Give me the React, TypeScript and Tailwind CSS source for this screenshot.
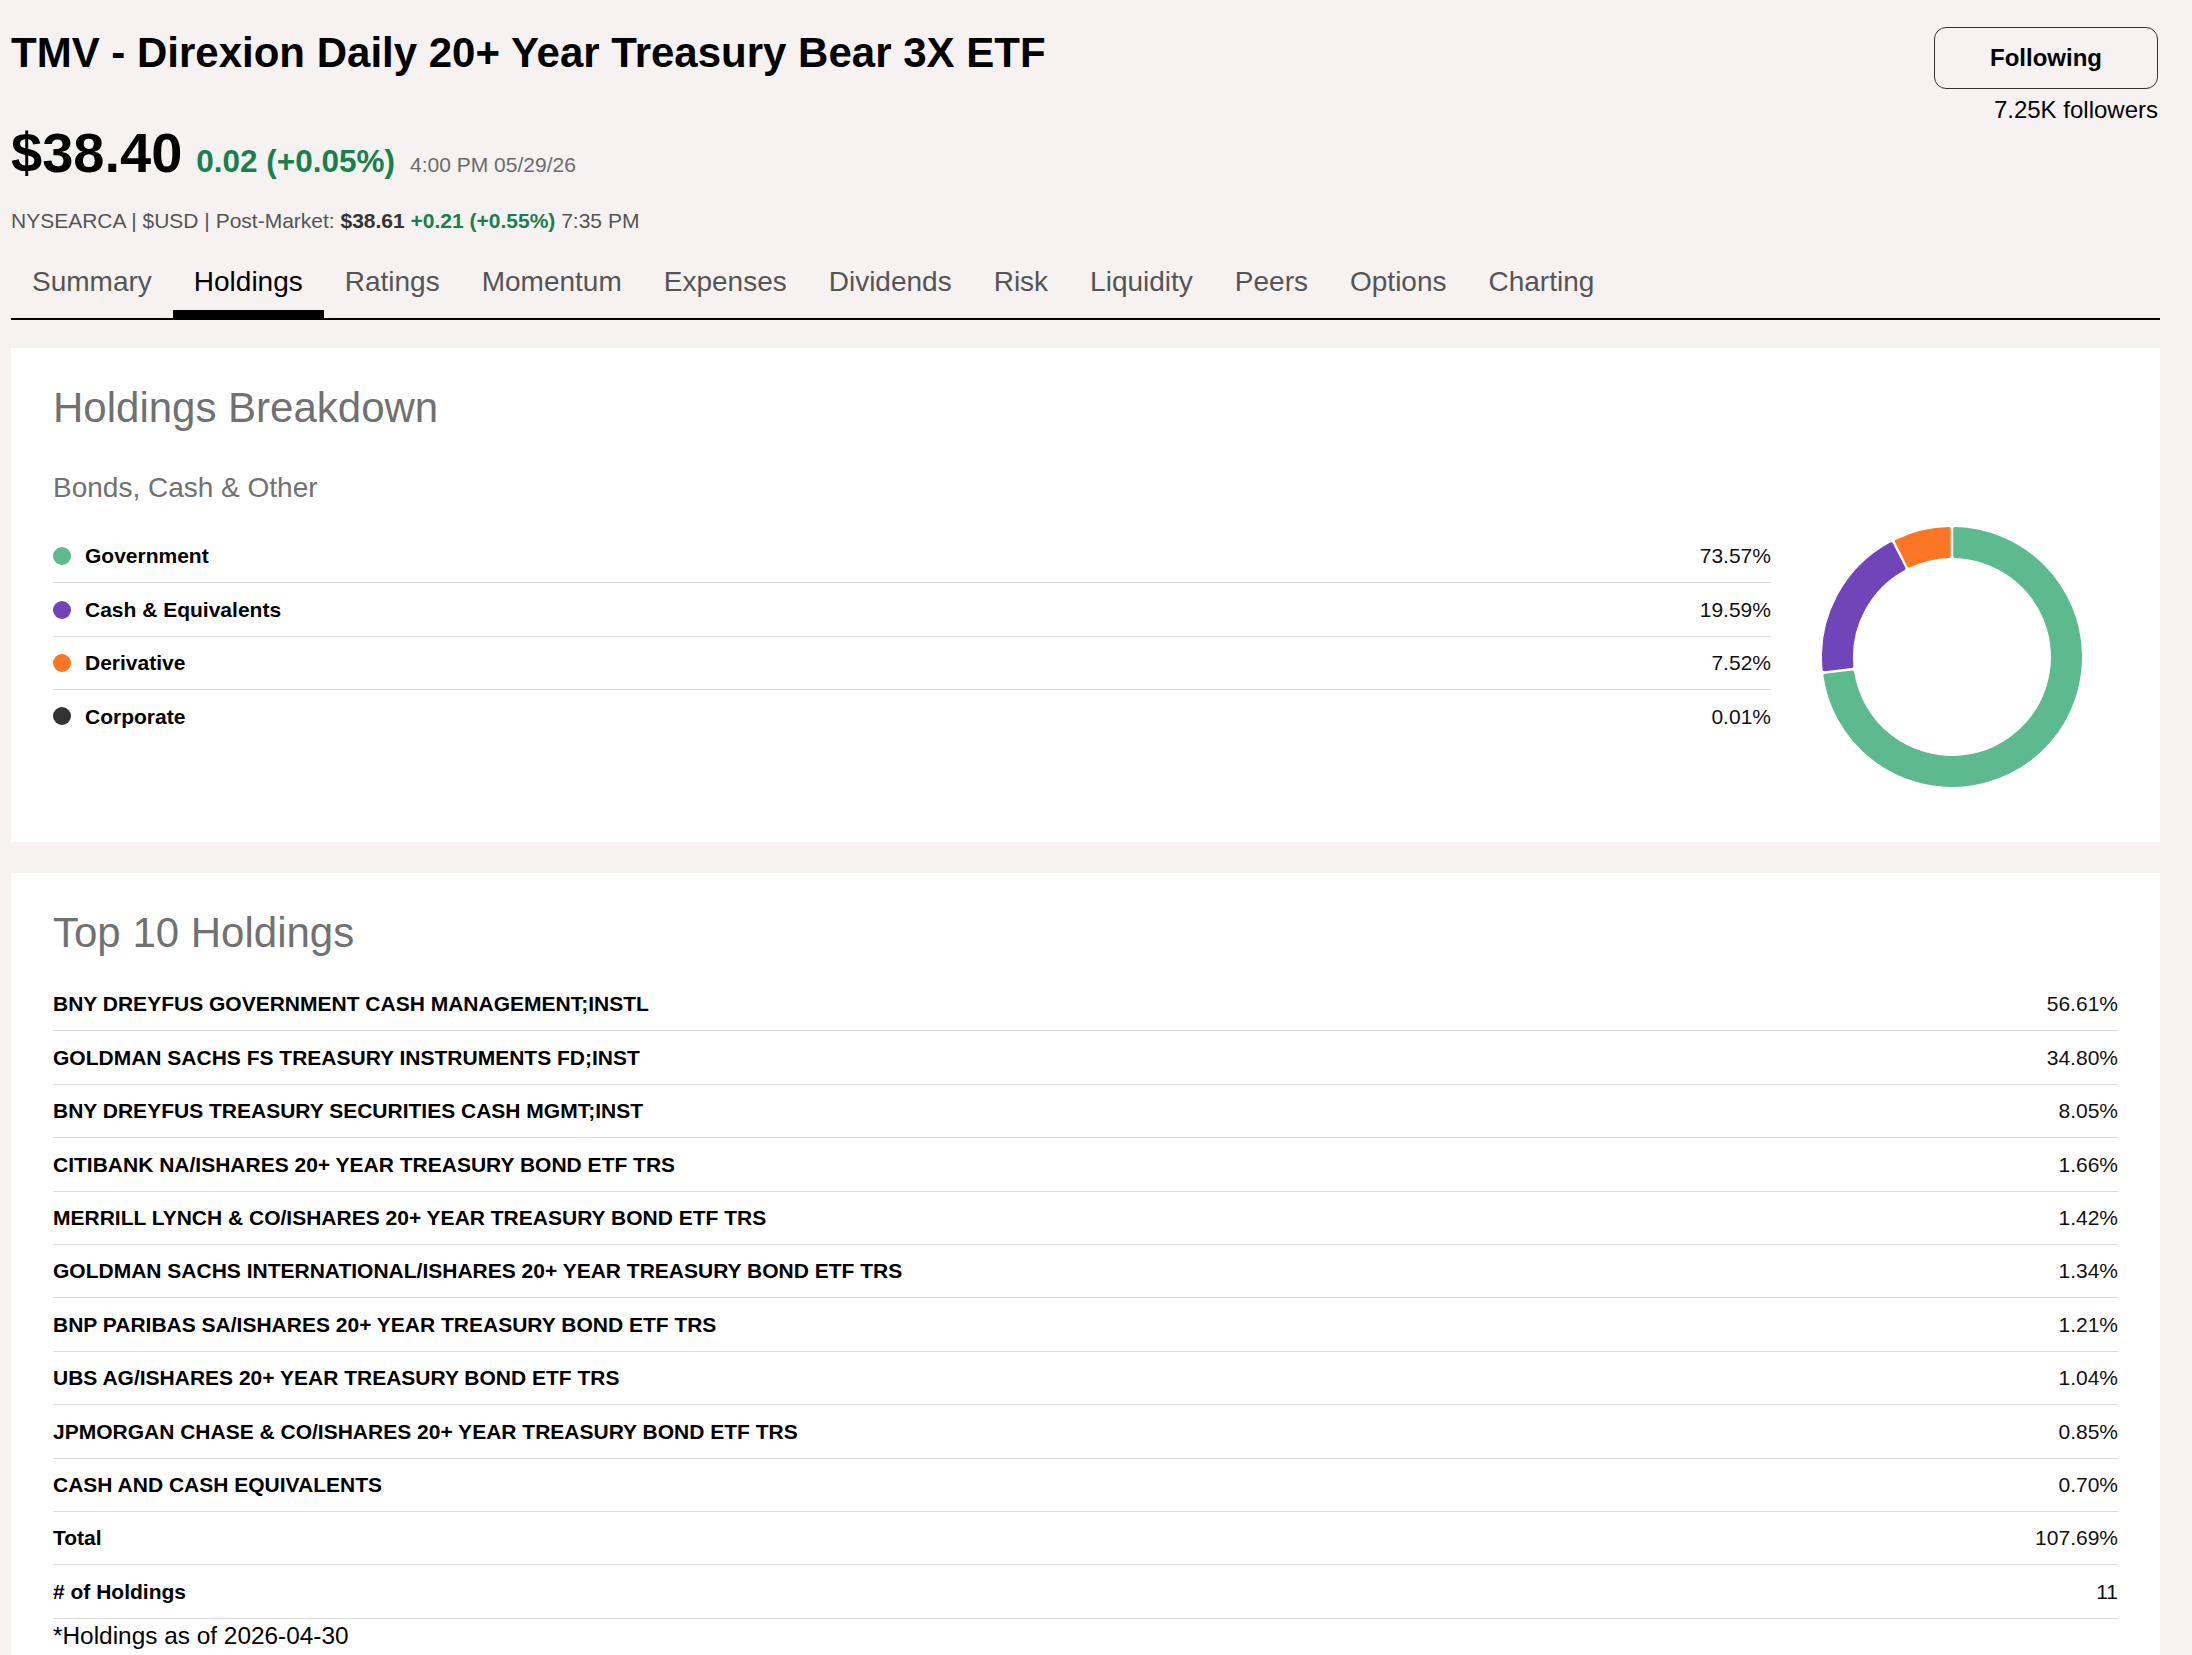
import React from "react";

const tabs = ["Summary", "Holdings", "Ratings", "Momentum", "Expenses", "Dividends", "Risk", "Liquidity", "Peers", "Options", "Charting"];

const breakdown = [
  { name: "Government", value: 73.57, color: "#5dba8f", dot: "bg-[#5dba8f]" },
  { name: "Cash & Equivalents", value: 19.59, color: "#7045ba", dot: "bg-[#7045ba]" },
  { name: "Derivative", value: 7.52, color: "#fd7625", dot: "bg-[#fd7625]" },
  { name: "Corporate", value: 0.01, color: "#333333", dot: "bg-[#333333]" },
];

const holdings: [string, string][] = [
  ["BNY DREYFUS GOVERNMENT CASH MANAGEMENT;INSTL", "56.61%"],
  ["GOLDMAN SACHS FS TREASURY INSTRUMENTS FD;INST", "34.80%"],
  ["BNY DREYFUS TREASURY SECURITIES CASH MGMT;INST", "8.05%"],
  ["CITIBANK NA/ISHARES 20+ YEAR TREASURY BOND ETF TRS", "1.66%"],
  ["MERRILL LYNCH & CO/ISHARES 20+ YEAR TREASURY BOND ETF TRS", "1.42%"],
  ["GOLDMAN SACHS INTERNATIONAL/ISHARES 20+ YEAR TREASURY BOND ETF TRS", "1.34%"],
  ["BNP PARIBAS SA/ISHARES 20+ YEAR TREASURY BOND ETF TRS", "1.21%"],
  ["UBS AG/ISHARES 20+ YEAR TREASURY BOND ETF TRS", "1.04%"],
  ["JPMORGAN CHASE & CO/ISHARES 20+ YEAR TREASURY BOND ETF TRS", "0.85%"],
  ["CASH AND CASH EQUIVALENTS", "0.70%"],
  ["Total", "107.69%"],
  ["# of Holdings", "11"],
];

function arcPath(a0: number, a1: number, Ro: number, Ri: number, d: number, cx: number, cy: number) {
  const rad = (deg: number) => (deg * Math.PI) / 180;
  const o0 = rad(a0) + Math.asin(d / Ro);
  const o1 = rad(a1) - Math.asin(d / Ro);
  const i0 = rad(a0) + Math.asin(d / Ri);
  const i1 = rad(a1) - Math.asin(d / Ri);
  const pt = (r: number, t: number) => `${(cx + r * Math.sin(t)).toFixed(3)} ${(cy - r * Math.cos(t)).toFixed(3)}`;
  const lo = o1 - o0 > Math.PI ? 1 : 0;
  const li = i1 - i0 > Math.PI ? 1 : 0;
  return `M ${pt(Ro, o0)} A ${Ro} ${Ro} 0 ${lo} 1 ${pt(Ro, o1)} L ${pt(Ri, i1)} A ${Ri} ${Ri} 0 ${li} 0 ${pt(Ri, i0)} Z`;
}

function Donut() {
  const total = breakdown.reduce((s, b) => s + b.value, 0);
  let acc = 0;
  const segs = breakdown.map((b) => {
    const a0 = (acc / total) * 360;
    acc += b.value;
    const a1 = (acc / total) * 360;
    return { ...b, a0, a1 };
  });
  return (
    <svg width="260" height="260" viewBox="0 0 260 260" className="block">
      {segs
        .filter((s) => s.a1 - s.a0 > 3)
        .map((s) => (
          <path
            key={s.name}
            d={arcPath(s.a0, s.a1, 128, 101, 3.2, 130, 130)}
            fill={s.color}
            stroke={s.color}
            strokeWidth={4}
            strokeLinejoin="round"
          />
        ))}
    </svg>
  );
}

export default function App() {
  return (
    <div className="min-h-screen bg-[#f5f2f1] font-['Liberation_Sans',Arial,sans-serif] text-black pl-[11px] pr-[32px] pb-[40px]">
      {/* Header */}
      <div className="flex justify-between items-start">
        <div className="pt-[29px]">
          <h1 className="text-[42px] leading-[48px] font-bold text-black">TMV - Direxion Daily 20+ Year Treasury Bear 3X ETF</h1>
          <div className="flex items-baseline mt-[48px]">
            <span className="text-[56px] leading-[56px] font-bold text-black">$38.40</span>
            <span className="ml-[14px] text-[31.5px] leading-[36px] font-bold text-[#18804c]">0.02 (+0.05%)</span>
            <span className="ml-[15px] text-[21px] leading-[24px] text-[#6b6b6b]">4:00 PM 05/29/26</span>
          </div>
          <div className="mt-[28px] text-[21px] leading-[24px] text-[#555555]">
            NYSEARCA | $USD | Post-Market: <span className="font-bold text-[#333333]">$38.61</span>{" "}
            <span className="font-bold text-[#18804c]">+0.21 (+0.55%)</span> 7:35 PM
          </div>
        </div>
        <div className="flex flex-col items-end mt-[27px] mr-[2px]">
          <button className="w-[224px] h-[62px] border border-[#333333] rounded-[12px] text-[24px] font-bold text-black">
            Following
          </button>
          <div className="mt-[7px] text-[24px] leading-[28px] text-black">7.25K followers</div>
        </div>
      </div>

      {/* Tabs */}
      <div className="mt-[33px] flex border-b-2 border-black">
        {tabs.map((t) => (
          <div
            key={t}
            className={
              t === "Holdings"
                ? "px-[21px] pb-[12px] border-b-[8px] border-black text-[28px] leading-[32px] text-black"
                : "px-[21px] pb-[12px] border-b-[8px] border-transparent text-[28px] leading-[32px] text-[#555555]"
            }
          >
            {t}
          </div>
        ))}
      </div>

      {/* Holdings Breakdown */}
      <div className="mt-[28px] bg-white px-[42px] pt-[36px] pb-[55px]">
        <h2 className="text-[42px] leading-[48px] text-[#717171]">Holdings Breakdown</h2>
        <div className="mt-[40px] text-[28px] leading-[32px] text-[#717171]">Bonds, Cash &amp; Other</div>
        <div className="mt-[23px] flex items-start">
          <div className="flex-1 mt-[3px]">
            {breakdown.map((b, i) => (
              <div
                key={b.name}
                className={
                  i < breakdown.length - 1
                    ? "flex items-center justify-between h-[53.4px] border-b border-[#dddddd]"
                    : "flex items-center justify-between h-[52.4px]"
                }
              >
                <div className="flex items-center">
                  <span className={`w-[18px] h-[18px] rounded-full ${b.dot}`} />
                  <span className="ml-[14px] text-[21px] font-bold text-black">{b.name}</span>
                </div>
                <span className="text-[21px] text-[#111111]">{b.value.toFixed(2)}%</span>
              </div>
            ))}
          </div>
          <div className="ml-[51px] mr-[36px] w-[260px]">
            <Donut />
          </div>
        </div>
      </div>

      {/* Top 10 Holdings */}
      <div className="mt-[31px] bg-white px-[42px] pt-[36px] pb-[40px]">
        <h2 className="text-[42px] leading-[48px] text-[#717171]">Top 10 Holdings</h2>
        <div className="mt-[21px]">
          {holdings.map(([n, v]) => (
            <div key={n} className="flex items-center justify-between h-[53.4px] border-b border-[#dddddd]">
              <span className="text-[21px] font-bold text-black">{n}</span>
              <span className="text-[21px] text-[#111111]">{v}</span>
            </div>
          ))}
        </div>
        <div className="mt-[3px] text-[24.4px] leading-[28px] text-black">*Holdings as of 2026-04-30</div>
      </div>
    </div>
  );
}
